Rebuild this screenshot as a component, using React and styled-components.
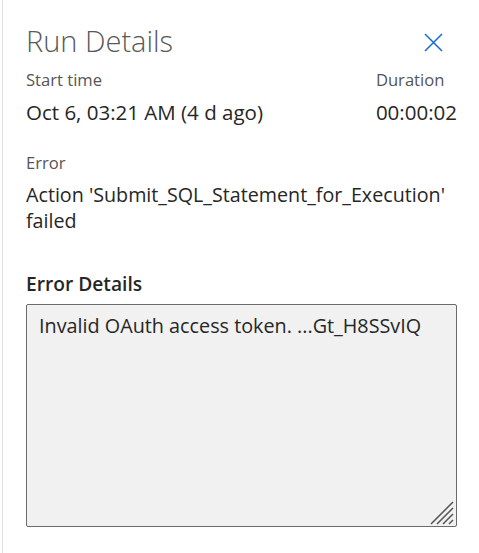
import React from 'react';
import styled, { createGlobalStyle } from 'styled-components';

const GlobalStyle = createGlobalStyle`
  html, body {
    margin: 0;
    padding: 0;
    background: #ffffff;
  }
  body {
    font-family: 'Open Sans', 'Noto Sans', sans-serif;
    color: #262626;
  }
`;

const Page = styled.div`
  padding-left: 2px;
  height: 553px;
  box-sizing: border-box;
`;

const Panel = styled.aside`
  height: 100%;
  border-left: 1px solid #e3e3e3;
  padding: 21px 22px 0 23px;
  box-sizing: border-box;
  display: flex;
  flex-direction: column;
`;

const Header = styled.div`
  display: flex;
  align-items: center;
  justify-content: space-between;
`;

const Title = styled.h1`
  margin: 0;
  font-size: 29px;
  font-weight: 300;
  color: #595959;
  line-height: 40px;
`;

const CloseButton = styled.button`
  border: 0;
  background: none;
  padding: 0;
  margin: 2px 14px 0 0;
  width: 20px;
  height: 20px;
  display: flex;
  align-items: center;
  justify-content: center;
  cursor: pointer;
`;

const MetaRow = styled.div`
  display: flex;
  justify-content: space-between;
  margin-top: 8px;
`;

const Field = styled.div`
  display: flex;
  flex-direction: column;
  margin-top: ${(p) => p.$gap || 0}px;
`;

const Label = styled.span`
  font-size: 16.6px;
  line-height: 22px;
  color: #555555;
`;

const Value = styled.span`
  font-size: ${(p) => p.$size || 20.5}px;
  line-height: 26px;
  color: #262626;
  margin-top: 8px;
`;

const SectionTitle = styled.h2`
  margin: 38px 0 0;
  font-size: 19.2px;
  font-weight: 600;
  line-height: 24px;
  color: #262626;
`;

const DetailsBox = styled.div`
  position: relative;
  margin-top: 8px;
  height: 223px;
  box-sizing: border-box;
  border: 1px solid #6b6b6b;
  border-radius: 2px;
  background: #f1f1f1;
  padding: 8px 12px;
  font-size: 19.8px;
  line-height: 26px;
  color: #262626;
`;

const Grip = styled.svg`
  position: absolute;
  right: 2px;
  bottom: 1px;
`;

const CloseIcon = () => (
  <svg width="19" height="19" viewBox="0 0 19 19">
    <path d="M1 1 L18 18 M18 1 L1 18" stroke="#1a6fd6" strokeWidth="1.6" fill="none" />
  </svg>
);

export default function App() {
  return (
    <>
      <GlobalStyle />
      <Page>
        <Panel>
          <Header>
            <Title>Run Details</Title>
            <CloseButton aria-label="Close">
              <CloseIcon />
            </CloseButton>
          </Header>
          <MetaRow>
            <Field>
              <Label>Start time</Label>
              <Value>Oct 6, 03:21 AM (4 d ago)</Value>
            </Field>
            <Field>
              <Label>Duration</Label>
              <Value>00:00:02</Value>
            </Field>
          </MetaRow>
          <Field $gap={27}>
            <Label>Error</Label>
            <Value $size={19.7}>Action 'Submit_SQL_Statement_for_Execution' failed</Value>
          </Field>
          <SectionTitle>Error Details</SectionTitle>
          <DetailsBox>
            Invalid OAuth access token. ...Gt_H8SSvIQ
            <Grip width="24" height="24" viewBox="0 0 24 24">
              <path
                d="M23 1 L1 23 M23 7 L7 23 M23 13 L13 23 M23 19 L19 23"
                stroke="#555"
                strokeWidth="1.5"
                fill="none"
              />
            </Grip>
          </DetailsBox>
        </Panel>
      </Page>
    </>
  );
}
